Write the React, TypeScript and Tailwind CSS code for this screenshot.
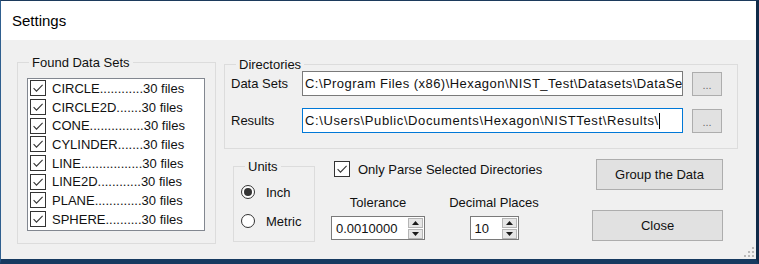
import React from "react";

const dataSets = [
  "CIRCLE............",
  "CIRCLE2D.......",
  "CONE...............",
  "CYLINDER.......",
  "LINE.................",
  "LINE2D............",
  "PLANE.............",
  "SPHERE..........",
];

const CheckBox = () => (
  <span className="flex h-[16px] w-[16px] shrink-0 items-center justify-center border border-[#333333] bg-white">
    <svg width="12" height="12" viewBox="0 0 12 12" fill="none">
      <path d="M1.6 6.1 4.5 9.1 10.6 2.9" stroke="#333333" strokeWidth="1.1" />
    </svg>
  </span>
);

const Radio = ({ checked }: { checked?: boolean }) => (
  <span className="flex h-[14px] w-[14px] shrink-0 items-center justify-center rounded-full border border-[#333333] bg-white">
    {checked && <span className="h-[8px] w-[8px] rounded-full bg-[#333333]" />}
  </span>
);

const Spinner = () => (
  <div className="mr-[1px] flex flex-col gap-[1px]">
    <div className="flex h-[10px] w-[15px] items-center justify-center border border-[#b5b5b5] bg-[#e6e6e6]">
      <svg width="7" height="4" viewBox="0 0 7 4">
        <path d="M3.5 0 7 4H0z" fill="#1a1a1a" />
      </svg>
    </div>
    <div className="flex h-[10px] w-[15px] items-center justify-center border border-[#b5b5b5] bg-[#e6e6e6]">
      <svg width="7" height="4" viewBox="0 0 7 4">
        <path d="M0 0h7L3.5 4z" fill="#1a1a1a" />
      </svg>
    </div>
  </div>
);

const Numeric = ({ value, width }: { value: string; width: string }) => (
  <div className={`mt-[6px] flex h-[24px] items-center justify-between border border-[#7a7a7a] bg-white pl-[4px] ${width}`}>
    <span>{value}</span>
    <Spinner />
  </div>
);

const DotButton = () => (
  <div className="ml-[9px] flex h-[24px] w-[30px] items-center justify-center border border-[#adadad] bg-[#e1e1e1] pt-[3px] text-[11px] text-[#6d6d6d]">
    ...
  </div>
);

export default function App() {
  return (
    <div className="flex h-[264px] w-[759px] flex-col border-t border-l border-r-[3px] border-b-[5px] border-t-[#1c3a5c] border-l-[#2f5f8f] border-r-[#0f2a48] border-b-[#163a60] font-['Liberation_Sans',Arial,sans-serif] text-[13px] leading-[15px] text-[#111111]">
      <div className="flex h-[39px] shrink-0 items-center bg-white pl-[11px] text-[15px] leading-[18px] text-black">
        Settings
      </div>

      <div className="relative flex flex-1 bg-[#f0f0f0] pl-[16px] pt-[15px]">
        {/* found data sets */}
        <fieldset className="h-[189px] w-[199px] shrink-0 border border-[#dcdcdc]">
          <legend className="ml-[11px] px-[3px] leading-[14px]">
            <span className="relative top-[1px]">Found Data Sets</span>
          </legend>
          <div className="ml-[9px] mt-[9px] h-[153px] w-[178px] border border-[#828790] bg-white">
            {dataSets.map((name) => (
              <div key={name} className="flex h-[18.7px] items-center">
                <span className="ml-[2px]">
                  <CheckBox />
                </span>
                <span className="ml-[6px] whitespace-nowrap">{name}30 files</span>
              </div>
            ))}
          </div>
        </fieldset>

        <div className="ml-[8px] mt-[2px] flex w-[514px] flex-col">
          {/* directories */}
          <fieldset className="h-[92px] w-[514px] border border-[#dcdcdc]">
            <legend className="ml-[11px] px-[3px] leading-[14px]">
              <span className="relative top-[1px]">Directories</span>
            </legend>
            <div className="ml-[6px] flex h-[25px] items-center">
              <span className="w-[71px]">Data Sets</span>
              <div className="flex h-[25px] w-[381px] items-center overflow-hidden whitespace-nowrap border border-[#7a7a7a] bg-white pl-[2px] tracking-[0.45px]">
                C:\Program Files (x86)\Hexagon\NIST_Test\Datasets\DataSets\
              </div>
              <DotButton />
            </div>
            <div className="ml-[6px] mt-[12px] flex h-[25px] items-center">
              <span className="w-[71px]">Results</span>
              <div className="flex h-[25px] w-[381px] items-center overflow-hidden whitespace-nowrap border border-[#0078d7] bg-white pl-[2px] tracking-[0.62px]">
                C:\Users\Public\Documents\Hexagon\NISTTest\Results\
                <span className="h-[16px] w-[1px] bg-black" />
              </div>
              <DotButton />
            </div>
          </fieldset>

          <div className="mt-[10px] flex">
            {/* units */}
            <fieldset className="ml-[9px] h-[83px] w-[82px] shrink-0 border border-[#dcdcdc]">
              <legend className="ml-[11px] px-[3px] leading-[14px]">
                <span className="relative top-[1px]">Units</span>
              </legend>
              <div className="ml-[7px] mt-[9px] flex h-[20px] items-center">
                <Radio checked />
                <span className="ml-[11px]">Inch</span>
              </div>
              <div className="ml-[7px] mt-[9px] flex h-[20px] items-center">
                <Radio />
                <span className="ml-[11px]">Metric</span>
              </div>
            </fieldset>

            <div className="ml-[16px] flex flex-col">
              <div className="ml-[3px] mt-[2px] flex h-[16px] items-center">
                <CheckBox />
                <span className="ml-[8px] whitespace-nowrap">Only Parse Selected Directories</span>
              </div>
              <div className="mt-[18px] flex">
                <div className="flex w-[94px] flex-col items-center">
                  <span>Tolerance</span>
                  <Numeric value="0.0010000" width="w-[94px]" />
                </div>
                <div className="ml-[24px] flex w-[90px] flex-col items-center">
                  <span className="whitespace-nowrap">Decimal Places</span>
                  <Numeric value="10" width="w-[49px]" />
                </div>
              </div>
            </div>

            <div className="ml-auto mr-[15px] flex flex-col items-end">
              <div className="flex h-[31px] w-[127px] items-center justify-center border border-[#adadad] bg-[#e1e1e1]">
                Group the Data
              </div>
              <div className="mt-[20px] flex h-[31px] w-[131px] items-center justify-center border border-[#adadad] bg-[#e1e1e1]">
                Close
              </div>
            </div>
          </div>
        </div>

        {/* size grip */}
        <svg className="absolute bottom-[1px] right-[1px]" width="12" height="12" viewBox="0 0 12 12">
          <rect x="9" y="1" width="2" height="2" fill="#b8b8b8" />
          <rect x="5" y="5" width="2" height="2" fill="#b8b8b8" />
          <rect x="9" y="5" width="2" height="2" fill="#b8b8b8" />
          <rect x="1" y="9" width="2" height="2" fill="#b8b8b8" />
          <rect x="5" y="9" width="2" height="2" fill="#b8b8b8" />
          <rect x="9" y="9" width="2" height="2" fill="#b8b8b8" />
        </svg>
      </div>
    </div>
  );
}
